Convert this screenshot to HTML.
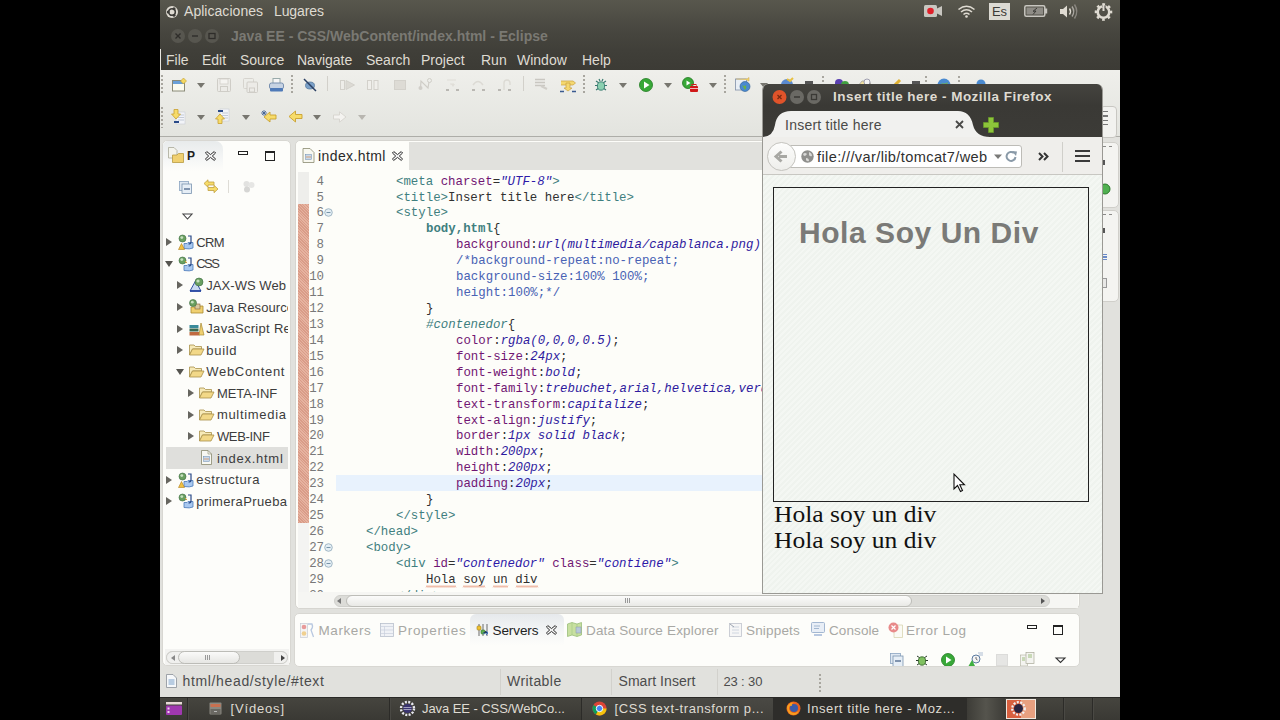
<!DOCTYPE html>
<html><head><meta charset="utf-8">
<style>
*{box-sizing:border-box}
html,body{margin:0;padding:0}
body{width:1280px;height:720px;background:#000;position:relative;overflow:hidden;font-family:"Liberation Sans",sans-serif}
.a{position:absolute}
.t{position:absolute;white-space:nowrap}
svg{position:absolute;overflow:visible}
#panel{left:160px;top:0;width:960px;height:70px;background:linear-gradient(#58574d 0,#4d4c44 20px,#46453e 34px,#403f39 50px,#3c3b35 70px)}
#etitle{left:160px;top:22px;width:960px;height:26px;background:linear-gradient(#3b3a36,#3c3b37)}
#menubar{left:160px;top:48px;width:960px;height:22px;background:#3c3b37}
#toolbar{left:160px;top:70px;width:960px;height:66px;background:linear-gradient(#efefeb,#e3e4df)}
#tbline{left:160px;top:136px;width:960px;height:1px;background:#adada8;box-shadow:0 1px #efefec,0 2px #e9e9e6}
#main{left:160px;top:137px;width:960px;height:560px;background:#e1e1dd}
#taskbar{left:160px;top:697px;width:960px;height:23px;background:linear-gradient(#46453f,#3a3934)}
.menu{font-size:14px;color:#dfdbd2;top:52px}
.ptxt{font-size:14px;color:#dfdbd2;top:3px}
.dd{position:absolute;width:0;height:0;border-left:4.5px solid transparent;border-right:4.5px solid transparent;border-top:5px solid #77766f}
.grip{position:absolute;width:2px;background:repeating-linear-gradient(#a8a69f 0 2px,transparent 2px 4px)}
.tree{font-size:13px;color:#3c3c3c;line-height:16px}
.tri{position:absolute;width:0;height:0;border-top:4px solid transparent;border-bottom:4px solid transparent;border-left:6px solid #66655f}
.trid{position:absolute;width:0;height:0;border-left:4px solid transparent;border-right:4px solid transparent;border-top:6px solid #55544f}
.code{position:absolute;white-space:pre;font-family:"Liberation Mono",monospace;font-size:12.4px;line-height:15.93px}
.ln{position:absolute;white-space:pre;font-family:"Liberation Mono",monospace;font-size:12.4px;line-height:15.93px;color:#787878;text-align:right;width:20px}
.tg{color:#3f7f7f}.an{color:#711673}.av{color:#2e1aa8;font-style:italic}.tx{color:#303030}
.sel{color:#3f7f7f;font-weight:bold}.pr{color:#711673}.pv{color:#2e1a9e;font-style:italic}.cm{color:#4862b4}.id{color:#3f7f7f;font-style:italic}
.btab{font-size:13.5px;color:#a8a8a4}
.stat{font-size:14px;color:#4c4c4c}
.task{font-size:13px;color:#dfdbd2;top:701px}
</style></head><body>
<div class="a" id="panel"></div>
<div class="a" id="toolbar"></div>
<div class="a" id="tbline"></div>
<div class="a" id="main"></div>
<div class="a" id="taskbar"></div>
<div class="a" style="left:160px;top:49px;width:1px;height:21px;background:#e8e6e0"></div>

<!-- ===== Ubuntu panel ===== -->
<svg style="left:165px;top:5px" width="14" height="14" viewBox="0 0 14 14"><circle cx="7" cy="7" r="6" fill="#dfdbd2"/><circle cx="7" cy="7" r="3.3" fill="none" stroke="#3d3c38" stroke-width="1.6"/><circle cx="3.2" cy="7" r="1.5" fill="#3d3c38"/><circle cx="9" cy="3.8" r="1.5" fill="#3d3c38"/><circle cx="9" cy="10.2" r="1.5" fill="#3d3c38"/></svg>
<div class="t ptxt" style="left:184px;letter-spacing:0.04px">Aplicaciones</div>
<div class="t ptxt" style="left:274px;letter-spacing:-0.10px">Lugares</div>
<!-- indicators -->
<svg style="left:924px;top:5px" width="19" height="12" viewBox="0 0 19 12"><rect x="0" y="0" width="13" height="12" rx="1.5" fill="#c8c6c0"/><path d="M12 4 L18 1 L18 11 L12 8Z" fill="#c8c6c0"/><circle cx="6.5" cy="6" r="3.3" fill="#e0202a"/></svg>
<svg style="left:957px;top:5px" width="19" height="13" viewBox="0 0 19 13"><path d="M1.5 4.5 Q9.5 -2 17.5 4.5" fill="none" stroke="#dfdbd2" stroke-width="1.6"/><path d="M4 7 Q9.5 2.5 15 7" fill="none" stroke="#dfdbd2" stroke-width="1.6"/><path d="M6.5 9.5 Q9.5 7 12.5 9.5" fill="none" stroke="#dfdbd2" stroke-width="1.6"/><circle cx="9.5" cy="11.5" r="1.3" fill="#dfdbd2"/></svg>
<div class="a" style="left:989px;top:3px;width:21px;height:17px;background:#dcdad3"></div>
<div class="t" style="left:991px;top:3px;font-size:13px;color:#3c3b37;line-height:17px;width:17px;text-align:center">Es</div>
<svg style="left:1024px;top:5px" width="24" height="12" viewBox="0 0 24 12"><rect x="0.8" y="0.8" width="20" height="10.4" rx="1.5" fill="none" stroke="#c8c6c0" stroke-width="1.5"/><rect x="2.5" y="2.5" width="16.6" height="7" fill="#8e8c86"/><rect x="21" y="3.5" width="2.2" height="5" fill="#c8c6c0"/><path d="M13 3 L9 6.3 L12 6 L9 9.5" fill="none" stroke="#3c3b37" stroke-width="1"/></svg>
<svg style="left:1059px;top:4px" width="20" height="15" viewBox="0 0 20 15"><path d="M1 5 L4 5 L8 1.5 L8 13.5 L4 10 L1 10Z" fill="#dfdbd2"/><path d="M10.5 4.5 Q12.5 7.5 10.5 10.5" fill="none" stroke="#dfdbd2" stroke-width="1.4"/><path d="M13 2.5 Q16.5 7.5 13 12.5" fill="none" stroke="#a9a6a0" stroke-width="1.4"/><path d="M15.5 0.5 Q20 7.5 15.5 14.5" fill="none" stroke="#8a8780" stroke-width="1.4"/></svg>
<svg style="left:1094px;top:2px" width="19" height="19" viewBox="0 0 19 19"><circle cx="9.5" cy="10" r="5.8" fill="none" stroke="#dfdbd2" stroke-width="2.6"/><circle cx="9.5" cy="10" r="7.6" fill="none" stroke="#dfdbd2" stroke-width="2.4" stroke-dasharray="2.6 3.37" transform="rotate(-10 9.5 10)"/><path d="M7.5 3.5 H11.5 V8" fill="#3d3c38"/><path d="M9.5 1.5 V9" stroke="#dfdbd2" stroke-width="2"/></svg>

<!-- ===== Eclipse title ===== -->
<svg style="left:170px;top:28px" width="52" height="16" viewBox="0 0 52 16"><circle cx="8" cy="8" r="7" fill="#57564f"/><circle cx="25" cy="8" r="7" fill="#57564f"/><circle cx="42" cy="8" r="7" fill="#57564f"/><path d="M5.5 5.5 L10.5 10.5 M10.5 5.5 L5.5 10.5" stroke="#2e2d2a" stroke-width="1.4"/><path d="M22 8 H28" stroke="#2e2d2a" stroke-width="1.4"/><rect x="39" y="5.5" width="6" height="5" fill="none" stroke="#2e2d2a" stroke-width="1.3"/></svg>
<div class="t" style="left:231px;top:28px;font-size:14px;font-weight:bold;color:#7a7973;letter-spacing:0.01px">Java EE - CSS/WebContent/index.html - Eclipse</div>

<!-- ===== Menu ===== -->
<div class="t menu" style="left:166px">File</div>
<div class="t menu" style="left:202px">Edit</div>
<div class="t menu" style="left:240px">Source</div>
<div class="t menu" style="left:297px">Navigate</div>
<div class="t menu" style="left:366px">Search</div>
<div class="t menu" style="left:421px">Project</div>
<div class="t menu" style="left:481px">Run</div>
<div class="t menu" style="left:517px">Window</div>
<div class="t menu" style="left:582px">Help</div>
<!-- ===== Toolbar ===== -->
<div class="grip" style="left:161px;top:75px;height:20px"></div>
<div class="grip" style="left:161px;top:107px;height:21px"></div>
<div class="grip" style="left:291px;top:75px;height:20px"></div>
<div class="grip" style="left:583px;top:75px;height:20px"></div>
<div class="grip" style="left:724px;top:75px;height:20px"></div>
<div class="a" style="left:327px;top:76px;width:1px;height:15px;background:#d2d0ca"></div>
<div class="a" style="left:523px;top:76px;width:1px;height:15px;background:#d2d0ca"></div>
<!-- row1 -->
<svg style="left:172px;top:78px" width="15" height="14" viewBox="0 0 15 14"><rect x="0.5" y="2.5" width="12" height="10.5" fill="#fbfbf0" stroke="#8a8a78"/><rect x="1" y="3" width="11" height="3" fill="#6aa0d8"/><path d="M11.5 0 L14.5 3 L11.5 6 L8.5 3Z" fill="#f4d860" stroke="#c09a30" stroke-width="0.6"/></svg>
<div class="dd" style="left:197px;top:83px"></div>
<svg style="left:217px;top:78px" width="14" height="14" viewBox="0 0 14 14"><rect x="0.5" y="0.5" width="13" height="13" rx="1" fill="#ecebe7" stroke="#cfcdc7"/><rect x="3" y="1" width="8" height="5" fill="#f5f4f1" stroke="#d2d0ca" stroke-width="0.8"/><rect x="3.5" y="8.5" width="7" height="5" fill="none" stroke="#cfcdc7"/></svg>
<svg style="left:243px;top:78px" width="15" height="15" viewBox="0 0 15 15"><rect x="0.5" y="0.5" width="10" height="10" rx="1" fill="none" stroke="#d6d4ce"/><rect x="4" y="4" width="10.5" height="10.5" rx="1" fill="#ecebe7" stroke="#cfcdc7"/><rect x="6.5" y="10" width="5" height="4" fill="none" stroke="#cfcdc7"/></svg>
<svg style="left:269px;top:78px" width="15" height="14" viewBox="0 0 15 14"><rect x="4" y="0.5" width="7" height="5" fill="#f6f6f6" stroke="#9aa"/><rect x="0.5" y="5" width="14" height="6" rx="2" fill="#c7d3e3" stroke="#7890b0"/><rect x="1" y="10" width="13" height="3.5" rx="1" fill="#4f7ab8"/></svg>
<svg style="left:303px;top:78px" width="14" height="14" viewBox="0 0 14 14"><ellipse cx="7" cy="7.5" rx="4.5" ry="3.5" fill="#7aa0c8" stroke="#4f7398" stroke-width="0.7"/><path d="M1 1 L13 13" stroke="#2a3f63" stroke-width="1.5"/></svg>
<svg style="left:340px;top:80px" width="15" height="10" viewBox="0 0 15 10"><rect x="0.5" y="0.5" width="4" height="9" fill="#eeede9" stroke="#d3d1cb"/><path d="M6 0.5 L14.5 5 L6 9.5Z" fill="#dcdad4" stroke="#d3d1cb"/></svg>
<svg style="left:367px;top:80px" width="12" height="10" viewBox="0 0 12 10"><rect x="0.5" y="0.5" width="4" height="9" fill="#f0efeb" stroke="#d3d1cb"/><rect x="7" y="0.5" width="4" height="9" fill="#f0efeb" stroke="#d3d1cb"/></svg>
<svg style="left:394px;top:80px" width="12" height="10" viewBox="0 0 12 10"><rect x="0.5" y="0.5" width="11" height="9" fill="#dddbd5" stroke="#d3d1cb"/></svg>
<svg style="left:418px;top:78px" width="14" height="13" viewBox="0 0 14 13"><circle cx="2.5" cy="10" r="2" fill="#d0cec8"/><circle cx="11.5" cy="2.5" r="2" fill="none" stroke="#d0cec8"/><path d="M2.5 10 L3 3 L10 10 L11 4" fill="none" stroke="#cfcdc7" stroke-width="1.2"/></svg>
<svg style="left:445px;top:79px" width="15" height="12" viewBox="0 0 15 12"><path d="M2 1 H11 M5 5 H9" stroke="#dfddd7"/><path d="M6 5 L8 8 L10 5" fill="#e0ded8"/><path d="M1 11 H4 M11 11 H14" stroke="#a9a7a1" stroke-width="1.5"/></svg>
<svg style="left:471px;top:79px" width="15" height="12" viewBox="0 0 15 12"><path d="M2 6 Q7 -1 12 6" fill="none" stroke="#dcdad4" stroke-width="1.4"/><path d="M1 11 H4 M11 11 H14" stroke="#a9a7a1" stroke-width="1.5"/></svg>
<svg style="left:497px;top:79px" width="15" height="12" viewBox="0 0 15 12"><path d="M7 11 V4 Q7 1 10 1 Q13 1 13 4 V6" fill="none" stroke="#dcdad4" stroke-width="1.4"/><path d="M1 11 H4 M11 11 H14" stroke="#a9a7a1" stroke-width="1.5"/></svg>
<svg style="left:535px;top:78px" width="14" height="13" viewBox="0 0 14 13"><path d="M0 1.5 H10 M0 4.5 H10 M0 7.5 H10" stroke="#c9c7c1" stroke-width="1.6"/><path d="M6 8 L12 11" stroke="#d0cec8" stroke-width="2"/></svg>
<svg style="left:560px;top:78px" width="17" height="14" viewBox="0 0 17 14"><path d="M1 3 H13 L15.5 5 L13 7 H1" fill="#f5d870" stroke="#c8a040" stroke-width="0.7"/><path d="M6 5 V10 L4 10 L8 13 L12 10 L10 10 V5Z" fill="#f5d870" stroke="#c8a040" stroke-width="0.7"/><path d="M0 13.5 H4 M12 13.5 H16" stroke="#3a5a90" stroke-width="1.5"/></svg>
<svg style="left:594px;top:78px" width="14" height="14" viewBox="0 0 14 14"><g stroke="#3a7a70" stroke-width="1.2"><path d="M2 3 L5 5 M12 3 L9 5 M1 7.5 H4 M13 7.5 H10 M2 12 L5 10 M12 12 L9 10 M5 1 L6 3 M9 1 L8 3"/></g><ellipse cx="7" cy="8" rx="3.6" ry="4.2" fill="#8ad0b0" stroke="#3a7a70" stroke-width="0.9"/></svg>
<div class="dd" style="left:619px;top:83px"></div>
<svg style="left:639px;top:78px" width="14" height="14" viewBox="0 0 14 14"><circle cx="7" cy="7" r="6.5" fill="#38a838" stroke="#1f7a1f" stroke-width="0.8"/><path d="M5 3.5 L10.5 7 L5 10.5Z" fill="#fff"/></svg>
<div class="dd" style="left:664px;top:83px"></div>
<svg style="left:682px;top:77px" width="16" height="15" viewBox="0 0 16 15"><circle cx="6" cy="6" r="5.5" fill="#38a838" stroke="#1f7a1f" stroke-width="0.8"/><path d="M4.5 3.5 L8.5 6 L4.5 8.5Z" fill="#fff"/><rect x="8" y="9" width="8" height="6" rx="1" fill="#d01818"/><rect x="10" y="7.5" width="4" height="2" fill="none" stroke="#d01818"/><path d="M8 11.5 H16" stroke="#fff" stroke-width="0.7"/></svg>
<div class="dd" style="left:709px;top:83px"></div>
<svg style="left:735px;top:77px" width="16" height="15" viewBox="0 0 16 15"><rect x="0.5" y="2" width="11" height="11" fill="#e8eef5" stroke="#8090a8" stroke-width="0.8"/><circle cx="10" cy="9.5" r="5" fill="#4a8ad0" stroke="#2a5a90" stroke-width="0.6"/><path d="M7 8 Q9 10 11 8 Q12 11 10 13" fill="#6ab04a"/><path d="M1 2 H12 L14 0.5 V4 L12 3" fill="#f5d870" stroke="#c8a040" stroke-width="0.5"/></svg>
<div class="dd" style="left:760px;top:83px"></div>
<div class="a" style="left:770px;top:76px;width:340px;height:8px;overflow:hidden">
<svg style="left:11px;top:2px" width="14" height="14" viewBox="0 0 14 14"><circle cx="6" cy="7" r="6" fill="#5a8ad0"/><path d="M6 1 L9 3 L12 0" stroke="#e8c040" stroke-width="2" fill="none"/></svg>
<div class="a" style="left:35px;top:5px;width:8px;height:3px;background:#555"></div>
<div class="grip" style="left:52px;top:0;height:8px"></div>
<svg style="left:65px;top:2px" width="14" height="12" viewBox="0 0 14 12"><circle cx="4" cy="5" r="4" fill="#5a40b0"/><circle cx="10" cy="7" r="4" fill="#40a040"/></svg>
<svg style="left:87px;top:2px" width="16" height="12" viewBox="0 0 16 12"><path d="M1 8 L5 3 H12 L15 8Z" fill="#f0e0a0" stroke="#a0a0a0" stroke-width="0.8"/><circle cx="10" cy="4" r="3" fill="#f4f4f4" stroke="#8a8aa0" stroke-width="0.8"/></svg>
<svg style="left:122px;top:2px" width="10" height="10" viewBox="0 0 10 10"><path d="M1 9 L8 2" stroke="#e0b030" stroke-width="3"/></svg>
<div class="a" style="left:142px;top:5px;width:8px;height:3px;background:#555"></div>
<div class="grip" style="left:155px;top:0;height:8px"></div>
<svg style="left:167px;top:2px" width="14" height="14" viewBox="0 0 14 14"><circle cx="7" cy="7" r="6.5" fill="#4a8ad0"/><path d="M3 4 Q7 7 11 4 L9 9Z" fill="#70b050"/></svg>
<div class="grip" style="left:188px;top:0;height:8px"></div>
<svg style="left:206px;top:3px" width="10" height="10" viewBox="0 0 10 10"><circle cx="5" cy="5" r="4.5" fill="#4a8ad0"/></svg>
</div>
<!-- row2 -->
<svg style="left:171px;top:109px" width="15" height="16" viewBox="0 0 15 16"><rect x="5" y="3" width="9" height="12" fill="#f2f4f8" stroke="#c8ccd4" stroke-width="0.6"/><path d="M7 6 H13 M7 8.5 H13 M7 11 H13" stroke="#b0b8c8" stroke-width="0.7"/><rect x="3" y="12" width="5" height="2" fill="#2a4a88"/><path d="M3 0.5 H7 V5 H9.5 L5 10 L0.5 5 H3Z" fill="#f7dc6a" stroke="#c8a030" stroke-width="0.8"/></svg>
<div class="dd" style="left:197px;top:115px"></div>
<svg style="left:215px;top:108px" width="15" height="16" viewBox="0 0 15 16"><rect x="5" y="1" width="9" height="12" fill="#f2f4f8" stroke="#c8ccd4" stroke-width="0.6"/><path d="M7 5 H13 M7 7.5 H13 M7 10 H13" stroke="#b0b8c8" stroke-width="0.7"/><rect x="3" y="2" width="5" height="2" fill="#2a4a88"/><path d="M3 15.5 H7 V11 H9.5 L5 6 L0.5 11 H3Z" fill="#f7dc6a" stroke="#c8a030" stroke-width="0.8"/></svg>
<div class="dd" style="left:242px;top:115px"></div>
<svg style="left:261px;top:110px" width="16" height="14" viewBox="0 0 16 14"><path d="M15 5 H9 V2 L3 7 L9 12 V9 H15Z" fill="#f7dc6a" stroke="#c8a030" stroke-width="0.9"/><path d="M1 1 L5 5 M5 1 L1 5 M3 0 V6 M0 3 H6" stroke="#3a5a90" stroke-width="0.8"/></svg>
<svg style="left:288px;top:110px" width="15" height="13" viewBox="0 0 15 13"><path d="M14 4.5 H7.5 V1 L1 6.5 L7.5 12 V8.5 H14Z" fill="#f7dc6a" stroke="#c8a030" stroke-width="0.9"/></svg>
<div class="dd" style="left:313px;top:115px"></div>
<svg style="left:333px;top:111px" width="14" height="12" viewBox="0 0 14 12"><path d="M0.5 4 H6.5 V0.8 L13 6 L6.5 11.2 V8 H0.5Z" fill="#f4f3f0" stroke="#d6d4ce" stroke-width="0.9"/></svg>
<div class="dd" style="left:358px;top:115px;border-top-color:#b8b6b0"></div>
<!-- ===== Project Explorer ===== -->
<div class="a" style="left:162px;top:140px;width:129px;height:526px;background:#fdfdfa;border-radius:5px;border:1px solid #d8d7d2"></div>
<div class="a" style="left:163px;top:141px;width:60px;height:30px;background:linear-gradient(#e8ebec,#f7f8f7 70%,#fdfdfa);border-radius:5px 8px 0 0"></div>
<svg style="left:168px;top:147px" width="16" height="16" viewBox="0 0 16 16"><path d="M0.5 0.5 H6 L9 3.5 V11 H0.5Z" fill="#f4f4ec" stroke="#a8a898" stroke-width="0.8"/><path d="M4.5 8 H9 L10.5 6.5 H15.5 V15.5 H4.5Z" fill="#f0d070" stroke="#b89a40" stroke-width="0.8"/></svg>
<div class="t" style="left:187px;top:149px;font-size:12px;font-weight:bold;color:#202020">P</div>
<svg style="left:205px;top:151px" width="11" height="10" viewBox="0 0 11 10"><path d="M1.8 0.6 L5.5 3.6 L9.2 0.6 L10.6 2 L7.3 5 L10.6 8 L9.2 9.4 L5.5 6.4 L1.8 9.4 L0.4 8 L3.7 5 L0.4 2Z" fill="#fafafa" stroke="#262626" stroke-width="1"/></svg>
<div class="a" style="left:238px;top:151px;width:10px;height:4px;border:1.3px solid #222"></div>
<div class="a" style="left:265px;top:151px;width:10px;height:10px;border:1.3px solid #222;border-top-width:2.2px"></div>
<!-- explorer toolbar -->
<svg style="left:179px;top:181px" width="13" height="13" viewBox="0 0 13 13"><rect x="0.5" y="0.5" width="9" height="9" fill="#dfe8f2" stroke="#8aa4c0" stroke-width="0.8"/><rect x="3" y="3" width="9.5" height="9.5" fill="#e6eef6" stroke="#7a94b0" stroke-width="0.8"/><path d="M5 8 H11" stroke="#4a6488" stroke-width="1.3"/></svg>
<svg style="left:203px;top:179px" width="16" height="15" viewBox="0 0 16 15"><path d="M1 4.5 L5 0.8 V3 H11 V6 H5 V8.2Z" fill="#f7dc6a" stroke="#c0a040" stroke-width="0.8"/><path d="M15 10 L11 6.3 V8.5 H5 V11.5 H11 V13.7Z" fill="#f7dc6a" stroke="#c0a040" stroke-width="0.8"/></svg>
<div class="a" style="left:228px;top:180px;width:1px;height:13px;background:#dedcd6"></div>
<svg style="left:242px;top:180px" width="14" height="14" viewBox="0 0 14 14"><circle cx="4.5" cy="4" r="3" fill="#e2e2e0"/><circle cx="9.5" cy="5" r="3" fill="#e6e6e4"/><circle cx="5" cy="9.5" r="3" fill="#d6d6d4"/></svg>
<svg style="left:182px;top:213px" width="11" height="7" viewBox="0 0 11 7"><path d="M1 1 H10 L5.5 6Z" fill="#fff" stroke="#444" stroke-width="1.1"/></svg>
<!-- explorer h-scroll -->
<div class="a" style="left:165px;top:649px;width:124px;height:16px;background:#f3f3f1"></div>
<div class="a" style="left:166px;top:651px;width:122px;height:13px;border-radius:6.5px;background:#dcdcd8;border:1px solid #cfcfcb"></div>
<div class="a" style="left:166px;top:651px;width:16px;height:13px;border-radius:6.5px 0 0 6.5px;background:#f0f0ee;border:1px solid #cfcfcb;border-right:none"></div>
<div class="a" style="left:274px;top:651px;width:14px;height:13px;border-radius:0 6.5px 6.5px 0;background:#f0f0ee;border:1px solid #cfcfcb;border-left:none"></div>
<div class="a" style="left:178px;top:651px;width:62px;height:13px;border-radius:6.5px;background:linear-gradient(#fafaf9,#e6e6e3);border:1px solid #bcbcb7"></div>
<div class="a" style="left:171px;top:654.5px;width:0;height:0;border-top:3px solid transparent;border-bottom:3px solid transparent;border-right:4px solid #888"></div>
<div class="a" style="left:281px;top:654.5px;width:0;height:0;border-top:3px solid transparent;border-bottom:3px solid transparent;border-left:4px solid #444"></div>
<div class="a" style="left:205px;top:655px;width:1px;height:5px;background:#999;box-shadow:2px 0 #999,4px 0 #999"></div>
<!-- tree -->
<div class="a" style="left:166px;top:447px;width:122px;height:22px;background:#dfdfdc"></div>
<div class="a" style="left:163px;top:230px;width:125px;height:290px;overflow:hidden">
<div class="tri" style="left:3.0px;top:8.3px"></div>
<svg style="left:15.0px;top:4.3px" width="16" height="16" viewBox="0 0 16 16"><path d="M6 9.5 H9 L10 8.5 H15 V14 Q12 15.5 6 14.5Z" fill="#a8c8f0" stroke="#4a78b8" stroke-width="0.8"/><circle cx="4.5" cy="4.5" r="3.5" fill="#6aa060" stroke="#3a6a40" stroke-width="0.6"/><circle cx="3.8" cy="3.6" r="1.4" fill="#c8e0c0"/><path d="M10 2 H13 V8 Q13 10 10.5 10" fill="none" stroke="#2a4a88" stroke-width="1.2"/><path d="M0.5 15.5 L3.5 9.5 L6.5 15.5Z" fill="#f0c040" stroke="#b08020" stroke-width="0.6"/></svg>
<div class="t tree" style="left:33.3px;top:4.8px;letter-spacing:-0.64px">CRM</div>
<div class="trid" style="left:2.0px;top:30.9px"></div>
<svg style="left:15.0px;top:25.9px" width="16" height="16" viewBox="0 0 16 16"><path d="M6 9.5 H9 L10 8.5 H15 V14 Q12 15.5 6 14.5Z" fill="#a8c8f0" stroke="#4a78b8" stroke-width="0.8"/><circle cx="4.5" cy="4.5" r="3.5" fill="#6aa060" stroke="#3a6a40" stroke-width="0.6"/><circle cx="3.8" cy="3.6" r="1.4" fill="#c8e0c0"/><path d="M10 2 H13 V8 Q13 10 10.5 10" fill="none" stroke="#2a4a88" stroke-width="1.2"/><path d="M7 5 L9 7" stroke="#e0a030" stroke-width="1"/></svg>
<div class="t tree" style="left:33.3px;top:26.4px;letter-spacing:-1.60px">CSS</div>
<div class="tri" style="left:14.0px;top:51.4px"></div>
<svg style="left:26.0px;top:47.4px" width="16" height="16" viewBox="0 0 16 16"><path d="M1 14 L6.5 4 L12 14Z" fill="#c8d8f0" stroke="#3050a0" stroke-width="1"/><path d="M1 14 H12" stroke="#2040a0" stroke-width="1.6"/><circle cx="10" cy="5" r="4" fill="#6aa060" stroke="#3a6a40" stroke-width="0.6"/><circle cx="9" cy="4" r="1.6" fill="#c8e0c0"/></svg>
<div class="t tree" style="left:43.3px;top:47.9px;letter-spacing:0.05px">JAX-WS Web Services</div>
<div class="tri" style="left:14.0px;top:73.0px"></div>
<svg style="left:26.0px;top:69.0px" width="16" height="16" viewBox="0 0 16 16"><path d="M2 8 H7 L8 7 H14 V14 H2Z" fill="#f0d070" stroke="#a88a30" stroke-width="0.8"/><rect x="6" y="5" width="5" height="5" fill="#d8c8a0" stroke="#806030" stroke-width="0.6"/><circle cx="4" cy="4" r="3.5" fill="#6aa060" stroke="#3a6a40" stroke-width="0.6"/><circle cx="3.3" cy="3.2" r="1.4" fill="#c8e0c0"/></svg>
<div class="t tree" style="left:43.3px;top:69.5px;letter-spacing:0.09px">Java Resources</div>
<div class="tri" style="left:14.0px;top:94.6px"></div>
<svg style="left:26.0px;top:90.6px" width="16" height="16" viewBox="0 0 16 16"><rect x="0.5" y="4" width="9" height="3" fill="#3a8a9a"/><rect x="0.5" y="7.5" width="9" height="3" fill="#3a6a50"/><rect x="0.5" y="11" width="10" height="3.5" fill="#c06a40"/><path d="M10 14 L12 2 L15 14Z" fill="#f0d070" stroke="#a88a30" stroke-width="0.7"/></svg>
<div class="t tree" style="left:43.3px;top:91.1px;letter-spacing:0.30px">JavaScript Resources</div>
<div class="tri" style="left:14.0px;top:116.1px"></div>
<svg style="left:26.0px;top:112.1px" width="16" height="16" viewBox="0 0 16 16"><path d="M0.5 3 H5 L6.5 4.5 H12.5 V7 H3.5 L0.5 13Z" fill="#f7eab8" stroke="#a8904a" stroke-width="0.8"/><path d="M0.5 13 L3.5 7 H15 L12 13Z" fill="#f2d888" stroke="#a8904a" stroke-width="0.8"/></svg>
<div class="t tree" style="left:43.3px;top:112.6px;letter-spacing:0.69px">build</div>
<div class="trid" style="left:13.0px;top:138.7px"></div>
<svg style="left:26.0px;top:133.7px" width="16" height="16" viewBox="0 0 16 16"><path d="M0.5 3 H5 L6.5 4.5 H12.5 V7 H3.5 L0.5 13Z" fill="#f7eab8" stroke="#a8904a" stroke-width="0.8"/><path d="M0.5 13 L3.5 7 H15 L12 13Z" fill="#f2d888" stroke="#a8904a" stroke-width="0.8"/></svg>
<div class="t tree" style="left:43.3px;top:134.2px;letter-spacing:0.68px">WebContent</div>
<div class="tri" style="left:24.5px;top:159.3px"></div>
<svg style="left:36.0px;top:155.3px" width="16" height="16" viewBox="0 0 16 16"><path d="M0.5 3 H5 L6.5 4.5 H12.5 V7 H3.5 L0.5 13Z" fill="#f7eab8" stroke="#a8904a" stroke-width="0.8"/><path d="M0.5 13 L3.5 7 H15 L12 13Z" fill="#f2d888" stroke="#a8904a" stroke-width="0.8"/></svg>
<div class="t tree" style="left:53.9px;top:155.8px;letter-spacing:-0.01px">META-INF</div>
<div class="tri" style="left:24.5px;top:180.9px"></div>
<svg style="left:36.0px;top:176.9px" width="16" height="16" viewBox="0 0 16 16"><path d="M0.5 3 H5 L6.5 4.5 H12.5 V7 H3.5 L0.5 13Z" fill="#f7eab8" stroke="#a8904a" stroke-width="0.8"/><path d="M0.5 13 L3.5 7 H15 L12 13Z" fill="#f2d888" stroke="#a8904a" stroke-width="0.8"/></svg>
<div class="t tree" style="left:53.9px;top:177.4px;letter-spacing:0.70px">multimedia</div>
<div class="tri" style="left:24.5px;top:202.4px"></div>
<svg style="left:36.0px;top:198.4px" width="16" height="16" viewBox="0 0 16 16"><path d="M0.5 3 H5 L6.5 4.5 H12.5 V7 H3.5 L0.5 13Z" fill="#f7eab8" stroke="#a8904a" stroke-width="0.8"/><path d="M0.5 13 L3.5 7 H15 L12 13Z" fill="#f2d888" stroke="#a8904a" stroke-width="0.8"/></svg>
<div class="t tree" style="left:53.9px;top:198.9px;letter-spacing:-0.32px">WEB-INF</div>
<svg style="left:37.0px;top:220.0px" width="16" height="16" viewBox="0 0 16 16"><path d="M1.5 0.5 H8 L11.5 4 V14.5 H1.5Z" fill="#f8f8f2" stroke="#8a8a70" stroke-width="0.8"/><path d="M8 0.5 V4 H11.5" fill="none" stroke="#8a8a70" stroke-width="0.6"/><rect x="3.5" y="6.5" width="6" height="5" fill="#c8d8ea" stroke="#6a8ab0" stroke-width="0.5"/><path d="M4 9 H9" stroke="#e08030" stroke-width="0.6"/></svg>
<div class="t tree" style="left:53.9px;top:220.5px;letter-spacing:0.74px">index.html</div>
<div class="tri" style="left:3.0px;top:245.6px"></div>
<svg style="left:15.0px;top:241.6px" width="16" height="16" viewBox="0 0 16 16"><path d="M6 9.5 H9 L10 8.5 H15 V14 Q12 15.5 6 14.5Z" fill="#a8c8f0" stroke="#4a78b8" stroke-width="0.8"/><circle cx="4.5" cy="4.5" r="3.5" fill="#6aa060" stroke="#3a6a40" stroke-width="0.6"/><circle cx="3.8" cy="3.6" r="1.4" fill="#c8e0c0"/><path d="M10 2 H13 V8 Q13 10 10.5 10" fill="none" stroke="#2a4a88" stroke-width="1.2"/><path d="M0.5 15.5 L3.5 9.5 L6.5 15.5Z" fill="#f0c040" stroke="#b08020" stroke-width="0.6"/></svg>
<div class="t tree" style="left:33.3px;top:242.1px;letter-spacing:0.60px">estructura</div>
<div class="tri" style="left:3.0px;top:267.1px"></div>
<svg style="left:15.0px;top:263.1px" width="16" height="16" viewBox="0 0 16 16"><path d="M6 9.5 H9 L10 8.5 H15 V14 Q12 15.5 6 14.5Z" fill="#a8c8f0" stroke="#4a78b8" stroke-width="0.8"/><circle cx="4.5" cy="4.5" r="3.5" fill="#6aa060" stroke="#3a6a40" stroke-width="0.6"/><circle cx="3.8" cy="3.6" r="1.4" fill="#c8e0c0"/><path d="M10 2 H13 V8 Q13 10 10.5 10" fill="none" stroke="#2a4a88" stroke-width="1.2"/><path d="M7 5 L9 7" stroke="#e0a030" stroke-width="1"/></svg>
<div class="t tree" style="left:33.3px;top:263.6px;letter-spacing:0.40px">primeraPrueba</div>
</div>
<!-- ===== Editor ===== -->
<div class="a" style="left:295px;top:140px;width:785px;height:469px;background:#fdfdf9;border-radius:5px;border:1px solid #d6d5d0"></div>
<div class="a" style="left:409px;top:142px;width:670px;height:28px;background:#e1e1dd"></div>
<div class="a" style="left:296px;top:141px;width:113px;height:30px;background:#fdfdf9;border-radius:5px 5px 0 0"></div>
<svg style="left:302px;top:148px" width="13" height="15" viewBox="0 0 13 15"><path d="M1 0.5 H8 L12 4.5 V14.5 H1Z" fill="#f8f8f0" stroke="#8a8a70" stroke-width="0.8"/><rect x="3.5" y="6.5" width="6" height="5" fill="#c8d8ea" stroke="#6a8ab0" stroke-width="0.5"/><path d="M4 9 H9" stroke="#e08030" stroke-width="0.6"/></svg>
<div class="t" style="left:318px;top:148px;font-size:14px;color:#2a2a2a;letter-spacing:0.40px">index.html</div>
<svg style="left:392px;top:151px" width="11" height="10" viewBox="0 0 11 10"><path d="M1.8 0.6 L5.5 3.6 L9.2 0.6 L10.6 2 L7.3 5 L10.6 8 L9.2 9.4 L5.5 6.4 L1.8 9.4 L0.4 8 L3.7 5 L0.4 2Z" fill="#fafafa" stroke="#262626" stroke-width="1"/></svg>
<div class="a" style="left:298px;top:170px;width:780px;height:422px;overflow:hidden">
<div class="a" style="left:0px;top:2px;width:11px;height:32px;background:#eeeeeb"></div>
<div class="a" style="left:0px;top:34px;width:11px;height:318.5px;background:repeating-linear-gradient(45deg,#d99c88 0 1px,#e6b3a0 1px 2px)"></div>
<div class="a" style="left:0px;top:352.5px;width:11px;height:80px;background:#f4f4f2"></div>
<div class="a" style="left:38px;top:304.5px;width:760px;height:16px;background:#e8f2fd"></div>
<div class="ln" style="left:6px;top:4.60px">4</div>
<div class="code" style="left:98px;top:4.60px"><span class="tg">&lt;meta </span><span class="an">charset</span><span class="tx">=</span><span class="av">"UTF-8"</span><span class="tg">&gt;</span></div>
<div class="ln" style="left:6px;top:20.53px">5</div>
<div class="code" style="left:98px;top:20.53px"><span class="tg">&lt;title&gt;</span><span class="tx">Insert title here</span><span class="tg">&lt;/title&gt;</span></div>
<div class="ln" style="left:6px;top:36.46px">6</div>
<svg style="left:26px;top:38.3px" width="9" height="9" viewBox="0 0 9 9"><circle cx="4.5" cy="4.5" r="3.8" fill="#e4eef4" stroke="#98b0c0" stroke-width="0.9"/><path d="M2.5 4.5 H6.5" stroke="#6a8aa0" stroke-width="0.9"/></svg>
<div class="code" style="left:98px;top:36.46px"><span class="tg">&lt;style&gt;</span></div>
<div class="ln" style="left:6px;top:52.39px">7</div>
<div class="code" style="left:128px;top:52.39px"><span class="sel">body,html</span><span class="tx">{</span></div>
<div class="ln" style="left:6px;top:68.32px">8</div>
<div class="code" style="left:158px;top:68.32px"><span class="pr">background</span><span class="tx">:</span><span class="pv">url(multimedia/capablanca.png)</span><span class="tx">;</span></div>
<div class="ln" style="left:6px;top:84.25px">9</div>
<div class="code" style="left:158px;top:84.25px"><span class="cm">/*background-repeat:no-repeat;</span></div>
<div class="ln" style="left:6px;top:100.18px">10</div>
<div class="code" style="left:158px;top:100.18px"><span class="cm">background-size:100% 100%;</span></div>
<div class="ln" style="left:6px;top:116.11px">11</div>
<div class="code" style="left:158px;top:116.11px"><span class="cm">height:100%;*/</span></div>
<div class="ln" style="left:6px;top:132.04px">12</div>
<div class="code" style="left:128px;top:132.04px"><span class="tx">}</span></div>
<div class="ln" style="left:6px;top:147.97px">13</div>
<div class="code" style="left:128px;top:147.97px"><span class="id">#contenedor</span><span class="tx">{</span></div>
<div class="ln" style="left:6px;top:163.90px">14</div>
<div class="code" style="left:158px;top:163.90px"><span class="pr">color</span><span class="tx">:</span><span class="pv">rgba(0,0,0,0.5)</span><span class="tx">;</span></div>
<div class="ln" style="left:6px;top:179.83px">15</div>
<div class="code" style="left:158px;top:179.83px"><span class="pr">font-size</span><span class="tx">:</span><span class="pv">24px</span><span class="tx">;</span></div>
<div class="ln" style="left:6px;top:195.76px">16</div>
<div class="code" style="left:158px;top:195.76px"><span class="pr">font-weight</span><span class="tx">:</span><span class="pv">bold</span><span class="tx">;</span></div>
<div class="ln" style="left:6px;top:211.69px">17</div>
<div class="code" style="left:158px;top:211.69px"><span class="pr">font-family</span><span class="tx">:</span><span class="pv">trebuchet,arial,helvetica,verdana</span><span class="tx">;</span></div>
<div class="ln" style="left:6px;top:227.62px">18</div>
<div class="code" style="left:158px;top:227.62px"><span class="pr">text-transform</span><span class="tx">:</span><span class="pv">capitalize</span><span class="tx">;</span></div>
<div class="ln" style="left:6px;top:243.55px">19</div>
<div class="code" style="left:158px;top:243.55px"><span class="pr">text-align</span><span class="tx">:</span><span class="pv">justify</span><span class="tx">;</span></div>
<div class="ln" style="left:6px;top:259.48px">20</div>
<div class="code" style="left:158px;top:259.48px"><span class="pr">border</span><span class="tx">:</span><span class="pv">1px solid black</span><span class="tx">;</span></div>
<div class="ln" style="left:6px;top:275.41px">21</div>
<div class="code" style="left:158px;top:275.41px"><span class="pr">width</span><span class="tx">:</span><span class="pv">200px</span><span class="tx">;</span></div>
<div class="ln" style="left:6px;top:291.34px">22</div>
<div class="code" style="left:158px;top:291.34px"><span class="pr">height</span><span class="tx">:</span><span class="pv">200px</span><span class="tx">;</span></div>
<div class="ln" style="left:6px;top:307.27px">23</div>
<div class="code" style="left:158px;top:307.27px"><span class="pr">padding</span><span class="tx">:</span><span class="pv">20px</span><span class="tx">;</span></div>
<div class="ln" style="left:6px;top:323.20px">24</div>
<div class="code" style="left:128px;top:323.20px"><span class="tx">}</span></div>
<div class="ln" style="left:6px;top:339.13px">25</div>
<div class="code" style="left:98px;top:339.13px"><span class="tg">&lt;/style&gt;</span></div>
<div class="ln" style="left:6px;top:355.06px">26</div>
<div class="code" style="left:68px;top:355.06px"><span class="tg">&lt;/head&gt;</span></div>
<div class="ln" style="left:6px;top:370.99px">27</div>
<svg style="left:26px;top:372.8px" width="9" height="9" viewBox="0 0 9 9"><circle cx="4.5" cy="4.5" r="3.8" fill="#e4eef4" stroke="#98b0c0" stroke-width="0.9"/><path d="M2.5 4.5 H6.5" stroke="#6a8aa0" stroke-width="0.9"/></svg>
<div class="code" style="left:68px;top:370.99px"><span class="tg">&lt;body&gt;</span></div>
<div class="ln" style="left:6px;top:386.92px">28</div>
<svg style="left:26px;top:388.7px" width="9" height="9" viewBox="0 0 9 9"><circle cx="4.5" cy="4.5" r="3.8" fill="#e4eef4" stroke="#98b0c0" stroke-width="0.9"/><path d="M2.5 4.5 H6.5" stroke="#6a8aa0" stroke-width="0.9"/></svg>
<div class="code" style="left:98px;top:386.92px"><span class="tg">&lt;div </span><span class="an">id</span><span class="tx">=</span><span class="av">"contenedor"</span><span class="tx"> </span><span class="an">class</span><span class="tx">=</span><span class="av">"contiene"</span><span class="tg">&gt;</span></div>
<div class="ln" style="left:6px;top:402.85px">29</div>
<div class="code" style="left:128px;top:402.85px"><span class="tx">Hola soy un div</span></div>
<div class="ln" style="left:6px;top:418.78px">30</div>
<div class="code" style="left:98px;top:418.78px"><span class="tg">&lt;/div&gt;</span></div>
<svg style="left:128px;top:415.4px" width="30" height="3" viewBox="0 0 30 3"><path d="M0 2.5 L1 0.5 L2 2.5 L3 0.5 L4 2.5 L5 0.5 L6 2.5 L7 0.5 L8 2.5 L9 0.5 L10 2.5 L11 0.5 L12 2.5 L13 0.5 L14 2.5 L15 0.5 L16 2.5 L17 0.5 L18 2.5 L19 0.5 L20 2.5 L21 0.5 L22 2.5 L23 0.5 L24 2.5 L25 0.5 L26 2.5 L27 0.5 L28 2.5 L29 0.5 L30 2.5" fill="none" stroke="#e8a088" stroke-width="0.7"/></svg>
<svg style="left:165px;top:415.4px" width="22" height="3" viewBox="0 0 22 3"><path d="M0 2.5 L1 0.5 L2 2.5 L3 0.5 L4 2.5 L5 0.5 L6 2.5 L7 0.5 L8 2.5 L9 0.5 L10 2.5 L11 0.5 L12 2.5 L13 0.5 L14 2.5 L15 0.5 L16 2.5 L17 0.5 L18 2.5 L19 0.5 L20 2.5 L21 0.5 L22 2.5" fill="none" stroke="#e8a088" stroke-width="0.7"/></svg>
<svg style="left:195px;top:415.4px" width="15" height="3" viewBox="0 0 15 3"><path d="M0 2.5 L1 0.5 L2 2.5 L3 0.5 L4 2.5 L5 0.5 L6 2.5 L7 0.5 L8 2.5 L9 0.5 L10 2.5 L11 0.5 L12 2.5 L13 0.5 L14 2.5 L15 0.5" fill="none" stroke="#e8a088" stroke-width="0.7"/></svg>
<svg style="left:218px;top:415.4px" width="22" height="3" viewBox="0 0 22 3"><path d="M0 2.5 L1 0.5 L2 2.5 L3 0.5 L4 2.5 L5 0.5 L6 2.5 L7 0.5 L8 2.5 L9 0.5 L10 2.5 L11 0.5 L12 2.5 L13 0.5 L14 2.5 L15 0.5 L16 2.5 L17 0.5 L18 2.5 L19 0.5 L20 2.5 L21 0.5 L22 2.5" fill="none" stroke="#e8a088" stroke-width="0.7"/></svg>
</div>
<!-- editor h-scroll -->
<div class="a" style="left:298px;top:592px;width:780px;height:16px;background:#f6f6f3"></div>
<div class="a" style="left:334px;top:595px;width:716px;height:12px;border-radius:6px;background:#dcdcd8;border:1px solid #d0d0cc"></div>
<div class="a" style="left:346px;top:595px;width:566px;height:12px;border-radius:6px;background:linear-gradient(#fbfbfa,#e9e9e6);border:1px solid #bdbdb8"></div>
<div class="a" style="left:337px;top:598px;width:0;height:0;border-top:3px solid transparent;border-bottom:3px solid transparent;border-right:4px solid #777"></div>
<div class="a" style="left:1041px;top:598px;width:0;height:0;border-top:3px solid transparent;border-bottom:3px solid transparent;border-left:4px solid #555"></div>
<div class="a" style="left:625px;top:598px;width:1px;height:5px;background:#999;box-shadow:2px 0 #999,4px 0 #999"></div>
<!-- ===== Bottom panel ===== -->
<div class="a" style="left:294px;top:613px;width:786px;height:54px;background:#fdfdfa;border-radius:5px;border:1px solid #d8d7d2"></div>
<div class="a" style="left:470px;top:614px;width:94px;height:32px;background:linear-gradient(#e6e9ec,#f6f7f7 60%,#fdfdfa);border-radius:6px 6px 0 0"></div>
<svg style="left:300px;top:623px" width="14" height="15" viewBox="0 0 14 15"><rect x="0.5" y="0.5" width="7" height="14" fill="#f4f4f4" stroke="#c8ccd4" stroke-width="0.7"/><circle cx="4" cy="4" r="2.3" fill="#e89a9a"/><circle cx="4" cy="10.5" r="2.3" fill="#f0d090"/><path d="M8 1 H12 Q13.5 4 11 7 L13.5 14" fill="none" stroke="#b8c8e0" stroke-width="1.3"/></svg>
<div class="t btab" style="left:318.5px;top:622.5px;letter-spacing:0.58px">Markers</div>
<svg style="left:380px;top:623px" width="14" height="14" viewBox="0 0 14 14"><rect x="0.5" y="0.5" width="13" height="13" fill="#f0f2f6" stroke="#b8c0cc" stroke-width="0.8"/><path d="M0.5 3.5 H13.5 M0.5 7 H13.5 M0.5 10.5 H13.5 M4.5 3.5 V13.5" stroke="#c8d0dc" stroke-width="0.7"/></svg>
<div class="t btab" style="left:398px;top:622.5px;letter-spacing:0.69px">Properties</div>
<svg style="left:476px;top:623px" width="13" height="14" viewBox="0 0 13 14"><path d="M3 1 V13 M7 1 V13 M11 1 V13" stroke="#6a6a6a" stroke-width="1"/><rect x="1" y="3" width="4" height="4" rx="1" fill="#f0c030" stroke="#a08020" stroke-width="0.6"/><rect x="5" y="7" width="4" height="4" rx="1" fill="#60b050" stroke="#307030" stroke-width="0.6"/><path d="M7 10 L12 10 L10 8 M12 10 L10 12" stroke="#4070c0" stroke-width="1"/></svg>
<div class="t" style="left:492.5px;top:622.5px;font-size:13.5px;color:#222;letter-spacing:-0.09px">Servers</div>
<svg style="left:546px;top:625px" width="11" height="10" viewBox="0 0 11 10"><path d="M1.8 0.6 L5.5 3.6 L9.2 0.6 L10.6 2 L7.3 5 L10.6 8 L9.2 9.4 L5.5 6.4 L1.8 9.4 L0.4 8 L3.7 5 L0.4 2Z" fill="#fafafa" stroke="#262626" stroke-width="1"/></svg>
<svg style="left:567px;top:622px" width="15" height="15" viewBox="0 0 15 15"><path d="M0.5 2 L5 0.5 L10 2 L14.5 0.5 V13 L10 14.5 L5 13 L0.5 14.5Z" fill="#c8e0a0" stroke="#90b870" stroke-width="0.7"/><path d="M5 0.5 V13 M10 2 V14.5" stroke="#a8c888" stroke-width="0.7"/><rect x="9" y="5" width="5" height="6" fill="#b8c8d8" stroke="#8898a8" stroke-width="0.5"/></svg>
<div class="t btab" style="left:586px;top:622.5px;letter-spacing:0.18px">Data Source Explorer</div>
<svg style="left:729px;top:623px" width="13" height="14" viewBox="0 0 13 14"><rect x="0.5" y="0.5" width="12" height="13" fill="#f6f6f6" stroke="#c0c4cc" stroke-width="0.8"/><path d="M3 4 H10 M3 7 H10 M3 10 H10" stroke="#c8d0dc" stroke-width="0.8"/><path d="M1 1 L5 4" stroke="#8890a0" stroke-width="0.8"/></svg>
<div class="t btab" style="left:746px;top:622.5px;letter-spacing:0.17px">Snippets</div>
<svg style="left:811px;top:622px" width="14" height="15" viewBox="0 0 14 15"><rect x="0.5" y="0.5" width="13" height="10" rx="1" fill="#e8eef6" stroke="#9ab0cc" stroke-width="0.9"/><path d="M3 4 H9 M3 6.5 H8" stroke="#9ab0cc" stroke-width="0.9"/><rect x="3" y="12" width="8" height="2" fill="#b8c8e0"/></svg>
<div class="t btab" style="left:829px;top:622.5px;letter-spacing:0.10px">Console</div>
<svg style="left:888px;top:622px" width="16" height="16" viewBox="0 0 16 16"><path d="M6 3 H14.5 V15.5 H6Z" fill="#fafaf4" stroke="#d8d4b0" stroke-width="0.8"/><circle cx="5.5" cy="5.5" r="5" fill="#e88a8a"/><path d="M3.5 3.5 L7.5 7.5 M7.5 3.5 L3.5 7.5" stroke="#fff" stroke-width="1.2"/></svg>
<div class="t btab" style="left:906px;top:622.5px;letter-spacing:0.47px">Error Log</div>
<div class="a" style="left:1027px;top:625px;width:10px;height:4px;border:1.3px solid #222"></div>
<div class="a" style="left:1053px;top:625px;width:10px;height:10px;border:1.3px solid #222;border-top-width:2.2px"></div>
<div class="a" style="left:885px;top:650px;width:190px;height:16px;overflow:hidden">
<svg style="left:5px;top:3px" width="14" height="16" viewBox="0 0 14 16"><rect x="0.5" y="0.5" width="10" height="10" fill="#dfe8f2" stroke="#8aa4c0" stroke-width="0.8"/><rect x="3" y="3" width="10" height="12" fill="#e6eef6" stroke="#7a94b0" stroke-width="0.8"/><path d="M5 8 H11" stroke="#4a6488" stroke-width="1.3"/></svg>
<svg style="left:30px;top:3px" width="14" height="14" viewBox="0 0 14 14"><g stroke="#2a3a2a" stroke-width="1"><path d="M2 3 L5 5 M12 3 L9 5 M1 7.5 H4 M13 7.5 H10 M2 12 L5 10 M12 12 L9 10"/></g><ellipse cx="7" cy="8" rx="3.6" ry="4.2" fill="#80c060" stroke="#3a6a30" stroke-width="0.9"/></svg>
<svg style="left:56px;top:3px" width="14" height="14" viewBox="0 0 14 14"><circle cx="7" cy="7" r="6.5" fill="#38a838" stroke="#1f7a1f" stroke-width="0.8"/><path d="M5 3.5 L10.5 7 L5 10.5Z" fill="#fff"/></svg>
<svg style="left:83px;top:2px" width="15" height="14" viewBox="0 0 15 14"><circle cx="8" cy="7" r="4" fill="#f4f4f4" stroke="#5a7aa0" stroke-width="1"/><path d="M8 5 V7 L9.5 8" stroke="#333" stroke-width="0.7" fill="none"/><path d="M0.5 14 L4 8 L7 14Z" fill="#40b040"/><path d="M10 1 H15 M11 3 H15" stroke="#8aa0c0" stroke-width="0.7"/></svg>
<svg style="left:111px;top:4px" width="12" height="12" viewBox="0 0 12 12"><rect x="0.5" y="0.5" width="11" height="11" fill="#e6e6e4" stroke="#dcdcda"/></svg>
<svg style="left:135px;top:2px" width="16" height="14" viewBox="0 0 16 14"><rect x="0.5" y="3" width="7" height="11" fill="#f4f4f0" stroke="#b8b8a8" stroke-width="0.7"/><rect x="6" y="0.5" width="8" height="11" fill="#f4f4f0" stroke="#a8a898" stroke-width="0.7"/><path d="M2 6 H5 M2 8 H5 M8 3 H12 M8 5 H12" stroke="#88b060" stroke-width="0.8"/></svg>
<svg style="left:170px;top:7px" width="11" height="7" viewBox="0 0 11 7"><path d="M1 1 H10 L5.5 5.5Z" fill="#fff" stroke="#333" stroke-width="1.1"/></svg>
</div>

<!-- ===== Status bar ===== -->
<svg style="left:166px;top:674px" width="11" height="14" viewBox="0 0 11 14"><path d="M0.5 0.5 H7 L10.5 4 V13.5 H0.5Z" fill="#f6f8fa" stroke="#8a9098" stroke-width="0.8"/><path d="M2.5 6 H8.5 M2.5 8 H8.5 M2.5 10 H8.5" stroke="#7aa0c8" stroke-width="1"/></svg>
<div class="t stat" style="left:182.5px;top:673px;letter-spacing:0.65px">html/head/style/#text</div>
<div class="a" style="left:500px;top:669px;width:1px;height:26px;background:#d2d1cc"></div>
<div class="t stat" style="left:507px;top:673px;letter-spacing:0.44px">Writable</div>
<div class="a" style="left:611px;top:669px;width:1px;height:26px;background:#d2d1cc"></div>
<div class="t stat" style="left:618.5px;top:673px;letter-spacing:0.06px">Smart Insert</div>
<div class="a" style="left:717px;top:669px;width:1px;height:26px;background:#d2d1cc"></div>
<div class="t stat" style="left:723.5px;top:673.5px;font-size:13px;letter-spacing:-0.15px">23 : 30</div>
<div class="grip" style="left:819px;top:674px;height:20px"></div>
<!-- ===== Taskbar ===== -->
<div class="a" style="left:160px;top:697px;width:960px;height:1px;background:#2a2926"></div>
<svg style="left:166px;top:702px" width="16" height="13" viewBox="0 0 16 13"><rect x="0" y="0" width="16" height="2.5" fill="#e8dcd8"/><rect x="0" y="3.5" width="16" height="9.5" rx="1" fill="#a038b0"/><rect x="1.5" y="5.5" width="2" height="2" fill="#f0d0f0"/><rect x="1.5" y="9" width="2" height="2" fill="#f0d0f0"/></svg>
<div class="a" style="left:187px;top:698px;width:1px;height:22px;background:#2c2b28;box-shadow:1px 0 #4a4944"></div>
<svg style="left:209px;top:702px" width="13" height="13" viewBox="0 0 13 13"><rect x="0.5" y="0.5" width="12" height="12" rx="1" fill="#8a8880"/><rect x="1.5" y="2" width="10" height="3" fill="#c87050"/><rect x="1.5" y="7" width="10" height="5" fill="#6a6862"/><path d="M5 9.5 H8" stroke="#ccc" stroke-width="0.8"/></svg>
<div class="t task" style="left:230.5px;letter-spacing:0.84px">[Vídeos]</div>
<div class="a" style="left:389px;top:698px;width:1px;height:22px;background:#2c2b28;box-shadow:1px 0 #4a4944"></div>
<svg style="left:400px;top:701px" width="15" height="15" viewBox="0 0 15 15"><circle cx="7.5" cy="7.5" r="6.5" fill="none" stroke="#e8e8f0" stroke-width="2.4" stroke-dasharray="2 1.4"/><circle cx="7.5" cy="7.5" r="4.6" fill="#3a3470"/><path d="M3.5 6.5 H11.5 M3.5 8.5 H11.5" stroke="#e8e8f0" stroke-width="0.6"/></svg>
<div class="t task" style="left:422px;letter-spacing:-0.07px">Java EE - CSS/WebCo...</div>
<div class="a" style="left:581px;top:698px;width:192px;height:22px;background:linear-gradient(#4a4944,#403f3a)"></div>
<div class="a" style="left:581px;top:698px;width:1px;height:22px;background:#2c2b28"></div>
<svg style="left:592px;top:701px" width="15" height="15" viewBox="0 0 15 15"><circle cx="7.5" cy="7.5" r="7" fill="#db4437"/><path d="M7.5 7.5 L1.4 4 A7 7 0 0 0 4 13.6Z" fill="#0f9d58"/><path d="M7.5 7.5 L4 13.6 A7 7 0 0 0 14.5 7.5Z" fill="#f4c20d"/><circle cx="7.5" cy="7.5" r="3.2" fill="#4285f4" stroke="#fff" stroke-width="1"/></svg>
<div class="t task" style="left:614.5px;letter-spacing:0.58px">[CSS text-transform p...</div>
<div class="a" style="left:773px;top:698px;width:194px;height:22px;background:#2e2d2a"></div>
<svg style="left:786px;top:701px" width="15" height="15" viewBox="0 0 15 15"><circle cx="7.5" cy="7.5" r="7" fill="#e8601c"/><circle cx="8" cy="7" r="4" fill="#3a5aa8"/><path d="M1 6 Q3 1 8 1.5 Q5 3 6 5 Q3 4 3 8 Q4 12 9 12 Q12 11 13 9 Q12 14 7 14 Q1 13 1 6Z" fill="#f7a020"/></svg>
<div class="t task" style="left:807px;letter-spacing:0.59px">Insert title here - Moz...</div>
<div class="a" style="left:967px;top:698px;width:38px;height:22px;background:linear-gradient(90deg,#3d3c37,#55544d 50%,#3d3c37)"></div>
<div class="a" style="left:1006px;top:699px;width:30px;height:20px;background:#e8a080;border:1px solid #f0e8e0"></div>
<div class="a" style="left:1007px;top:700px;width:14px;height:18px;background:#d86040"></div>
<svg style="left:1011px;top:701px" width="15" height="15" viewBox="0 0 15 15"><circle cx="7.5" cy="7.5" r="6.3" fill="none" stroke="#f0f0f4" stroke-width="2.2" stroke-dasharray="2 1.4"/><circle cx="7.5" cy="7.5" r="4.5" fill="#2a2440"/></svg>
<div class="a" style="left:1063px;top:698px;width:1px;height:22px;background:#2c2b28;box-shadow:1px 0 #4a4944"></div>
<div class="a" style="left:1092px;top:698px;width:1px;height:22px;background:#2c2b28;box-shadow:1px 0 #4a4944"></div>

<!-- ===== right Eclipse strip (behind firefox) ===== -->
<div class="a" style="left:1100px;top:142px;width:19px;height:66px;background:#f4f4f1;border:1px solid #d0cfca;border-radius:0 5px 5px 0"></div>
<div class="a" style="left:1100px;top:210px;width:19px;height:92px;background:#f4f4f1;border:1px solid #d0cfca;border-radius:0 5px 5px 0"></div>
<div class="a" style="left:1100px;top:106px;width:17px;height:32px;background:#f2f2ef;border:1px solid #c8c7c2;border-radius:4px"></div>
<svg style="left:1103px;top:182px" width="8" height="14" viewBox="0 0 8 14"><circle cx="2" cy="7" r="5" fill="#50b050" stroke="#2a7a2a"/></svg>
<div class="a" style="left:1103px;top:146px;width:3px;height:1px;background:#8a8a88;box-shadow:6px 0 #8a8a88"></div>
<div class="a" style="left:1103px;top:160px;width:2px;height:5px;background:#555"></div>
<div class="a" style="left:1103px;top:214px;width:3px;height:1px;background:#8a8a88;box-shadow:6px 0 #8a8a88"></div>
<div class="a" style="left:1103px;top:228px;width:2px;height:5px;background:#555"></div>
<div class="a" style="left:1103px;top:254px;width:4px;height:6px;background:repeating-linear-gradient(#6a8ac8 0 1px,transparent 1px 2.5px)"></div>
<div class="a" style="left:1103px;top:278px;width:4px;height:10px;background:#e8e8e6;border:1px solid #999;border-left:none"></div>
<div class="a" style="left:1103px;top:111px;width:5px;height:14px;background:repeating-linear-gradient(#777 0 1.5px,transparent 1.5px 4.5px)"></div>


<!-- ===== Firefox ===== -->
<div class="a" style="left:762px;top:84px;width:341px;height:510px;background:#f2f4f0;border-radius:6px 6px 0 0;overflow:hidden;border:1px solid #9a9994;border-top:none">
  <div class="a" style="left:-1px;top:0;width:341px;height:53px;background:linear-gradient(#45443f,#3a3935 40%,#3c3b37)"></div>
  <!-- tab -->
  <svg style="left:-1px;top:26px" width="341" height="28" viewBox="0 0 341 28"><path d="M0 27 Q11 27 13 15 Q15 1 29 1 H196 Q208 1 211 15 Q214 27 228 27 V28 H0Z" fill="#f1f1ef"/></svg>
  <div class="a" style="left:-1px;top:53px;width:341px;height:38px;background:#efeeeb;border-bottom:1px solid #c8c7c2"></div>
  <div class="a" style="left:-1px;top:91px;width:341px;height:419px;background:repeating-linear-gradient(-45deg,#eff3ee 0 2px,#f4f7f3 2px 4px)"></div>
</div>
<svg style="left:772px;top:90px" width="50" height="14" viewBox="0 0 50 14"><circle cx="7.5" cy="7" r="7" fill="#e0532a"/><circle cx="25" cy="7" r="7" fill="#6a6964"/><circle cx="42" cy="7" r="7" fill="#6a6964"/><path d="M5.5 5 L9.5 9 M9.5 5 L5.5 9" stroke="#7a2a10" stroke-width="1.3"/><path d="M22 7 H28" stroke="#3a3935" stroke-width="1.5"/><rect x="39.5" y="4.5" width="5" height="5" fill="none" stroke="#3a3935" stroke-width="1.3"/></svg>
<div class="t" style="left:833px;top:88.5px;font-size:13.5px;font-weight:bold;color:#dfdbd2;letter-spacing:0.47px">Insert title here - Mozilla Firefox</div>
<div class="t" style="left:785px;top:116.5px;font-size:14px;color:#4a4a48;letter-spacing:0.24px">Insert title here</div>
<svg style="left:955px;top:120px" width="9" height="9" viewBox="0 0 9 9"><path d="M1 1 L8 8 M8 1 L1 8" stroke="#4a4a48" stroke-width="1.8"/></svg>
<svg style="left:983px;top:117px" width="16" height="16" viewBox="0 0 16 16"><path d="M5.5 0.5 H10.5 V5.5 H15.5 V10.5 H10.5 V15.5 H5.5 V10.5 H0.5 V5.5 H5.5Z" fill="#8cc43a" stroke="#6a9a28" stroke-width="0.8"/></svg>
<!-- urlbar -->
<div class="a" style="left:790px;top:145px;width:232px;height:23px;background:#fff;border:1px solid #bdbcb7;border-radius:0 3px 3px 0"></div>
<div class="a" style="left:767px;top:142px;width:29px;height:29px;background:linear-gradient(#fdfdfc,#eeeeeb);border:1px solid #c4c3be;border-radius:50%"></div>
<svg style="left:774px;top:150px" width="14" height="13" viewBox="0 0 14 13"><path d="M13 6.5 H5 M7.5 1.5 L2 6.5 L7.5 11.5" fill="none" stroke="#a8a8a4" stroke-width="3"/></svg>
<svg style="left:801px;top:150px" width="13" height="13" viewBox="0 0 13 13"><circle cx="6.5" cy="6.5" r="6.2" fill="#8e8e8c"/><path d="M2 4 Q4 2 6 4 Q5 6 3 6Z M8 2 Q11 3 11 6 Q9 7 8 5Z M5 8 Q8 8 8 11 Q6 12 5 10Z" fill="#d8d8d6"/></svg>
<div class="t" style="left:817px;top:148.5px;font-size:14.6px;color:#303030;letter-spacing:0.37px">file:///var/lib/tomcat7/web</div>
<svg style="left:994px;top:154px" width="8" height="6" viewBox="0 0 8 6"><path d="M0 0.5 H8 L4 5Z" fill="#7a7a78"/></svg>
<svg style="left:1005px;top:150px" width="13" height="13" viewBox="0 0 13 13"><path d="M10.5 7 A4.5 4.5 0 1 1 9 3" fill="none" stroke="#8a9aa8" stroke-width="2"/><path d="M7 1 L12 1.5 L11 6Z" fill="#8a9aa8"/></svg>
<svg style="left:1038px;top:152px" width="11" height="9" viewBox="0 0 11 9"><path d="M1 1 L4.5 4.5 L1 8 M6 1 L9.5 4.5 L6 8" fill="none" stroke="#333" stroke-width="2"/></svg>
<div class="a" style="left:1062px;top:142px;width:1px;height:30px;background:#d0cfca"></div>
<div class="a" style="left:1075px;top:150px;width:15px;height:13px;background:repeating-linear-gradient(#3a3a3a 0 2.5px,transparent 2.5px 5px)"></div>
<!-- content -->
<div class="a" style="left:773px;top:187px;width:316px;height:315px;border:1px solid #222"></div>
<div class="t" style="left:799px;top:216px;font-size:30px;font-weight:bold;color:#7a7a77;letter-spacing:0.55px">Hola Soy Un Div</div>
<div class="t" style="left:773.5px;top:502px;font-size:22.4px;font-family:'Liberation Serif',serif;color:#111;line-height:25.5px;transform:scaleX(1.14);transform-origin:0 0">Hola soy un div<br>Hola soy un div</div>
<svg style="left:953px;top:473px" width="13" height="20" viewBox="0 0 13 20"><path d="M1 1 V16 L4.5 12.5 L7.5 18.5 L9.5 17.5 L6.8 11.8 H11.5Z" fill="#fff" stroke="#111" stroke-width="1.1"/></svg>

</body></html>
